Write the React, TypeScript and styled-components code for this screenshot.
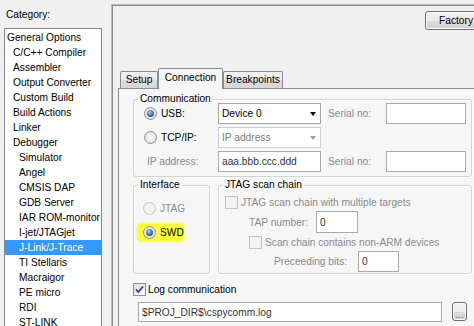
import React from 'react';
import styled, { createGlobalStyle, css } from 'styled-components';

const GlobalStyle = createGlobalStyle`
  *, *::before, *::after { box-sizing: border-box; }
  html, body { margin: 0; padding: 0; }
  body {
    background: #f0f0f0;
    font-family: "Liberation Sans", Arial, sans-serif;
    font-size: 10.2px;
    color: #000;
    overflow: hidden;
  }
`;

const GRAY = '#8a8a8a';

const Window = styled.div`
  display: flex;
  align-items: flex-start;
  width: 474px;
  height: 326px;
  overflow: hidden;
`;

// left column: category tree
const Sidebar = styled.div`
  display: flex;
  flex-direction: column;
  flex: none;
  width: 102px;
  height: 360px;
  padding: 8px 0 0 4px;
`;

const CategoryLabel = styled.div`
  line-height: 13px;
  padding-left: 2px;
  margin-bottom: 7px;
`;

const CategoryList = styled.ul`
  flex: 1;
  margin: 0;
  padding: 1px 0;
  list-style: none;
  background: #fff;
  border: 1px solid #828790;
  overflow: hidden;
`;

const CategoryItem = styled.li<{ $level: number; $selected?: boolean }>`
  height: 15px;
  line-height: 15px;
  padding-left: ${p => 2 + p.$level * 6}px;
  white-space: nowrap;
  ${p => p.$selected && css`
    background: #3399ff;
    color: #fff;
  `}
`;

// right side: options panel
const Panel = styled.section`
  flex: none;
  display: flex;
  flex-direction: column;
  width: 380px;
  height: 360px;
  margin: 4px 0 0 9px;
  padding: 6px 4px 0 6px;
  border-top: 1px solid #b9b9b9;
  border-left: 1px solid #b9b9b9;
  box-shadow: inset 1px 1px 0 #8c8c8c;
`;

const HeaderRow = styled.div`
  display: flex;
  justify-content: flex-end;
`;

const PushButton = styled.button<{ $width: number; $height: number }>`
  width: ${p => p.$width}px;
  height: ${p => p.$height}px;
  padding: 0;
  font: inherit;
  color: #000;
  border: 1px solid #707070;
  border-radius: 3px;
  background: linear-gradient(#f2f2f2 0%, #ebebeb 50%, #dddddd 51%, #cfcfcf 100%);
  box-shadow: inset 0 0 0 1px #fcfcfc;
`;

const Ellipsis = styled.span`
  display: block;
  color: #6a6a6a;
  line-height: 8px;
  margin-top: 6px;
`;

const TabStrip = styled.div`
  display: flex;
  align-items: flex-end;
  height: 20px;
  margin-top: 38px;
  padding-left: 2px;
`;

const Tab = styled.div<{ $width: number; $active?: boolean }>`
  position: relative;
  width: ${p => p.$width}px;
  height: 17px;
  line-height: 15px;
  text-align: center;
  border: 1px solid #898c95;
  border-bottom: none;
  border-radius: 2px 2px 0 0;
  background: linear-gradient(#f2f2f2, #ebebeb 50%, #dddddd 51%, #d6d6d6);
  ${p => p.$active && css`
    z-index: 1;
    height: 21px;
    margin-bottom: -1px;
    line-height: 18px;
    background: #f6f6f6;
  `}
`;

const TabPage = styled.div`
  flex: 1;
  padding: 6px 0 0 14px;
  background: #f6f6f6;
  border: 1px solid #898c95;
`;

const GroupBox = styled.fieldset<{ $width: number }>`
  margin: 0;
  padding: 0;
  min-width: 0;
  width: ${p => p.$width}px;
  border: 1px solid #d3d3d3;
  border-radius: 3px;
  box-shadow: inset 1px 1px 0 #fff, 1px 1px 0 #fff;
`;

const Legend = styled.legend`
  margin-left: 4px;
  padding: 0 2px;
  height: 8px;
  line-height: 8px;
`;

const CommGrid = styled.div`
  display: grid;
  grid-template-columns: 74px 110px 58px 80px;
  grid-auto-rows: 21px;
  row-gap: 3px;
  align-items: center;
  padding: 0 0 4px 10px;
`;

const Option = styled.label<{ $disabled?: boolean }>`
  display: flex;
  align-items: center;
  gap: 4px;
  color: ${p => (p.$disabled ? GRAY : '#000')};
`;

const Label = styled.span<{ $disabled?: boolean; $indent?: number; $width?: number }>`
  flex: none;
  white-space: nowrap;
  color: ${p => (p.$disabled ? GRAY : '#000')};
  padding-left: ${p => p.$indent ?? 0}px;
  ${p => p.$width !== undefined && css`width: ${p.$width}px;`}
`;

const Radio = styled.span<{ $checked?: boolean; $disabled?: boolean }>`
  position: relative;
  flex: none;
  width: 13px;
  height: 13px;
  border-radius: 50%;
  border: 1px solid ${p => (p.$disabled ? '#c4c4c4' : '#8e8f8f')};
  background: ${p => (p.$disabled ? '#f2f2f2' : 'radial-gradient(circle at 50% 50%, #f8f8f8, #d8d8d8)')};
  ${p => p.$checked && css`
    &::after {
      content: "";
      position: absolute;
      left: 2px;
      top: 2px;
      width: 7px;
      height: 7px;
      border-radius: 50%;
      background: radial-gradient(circle at 40% 35%, #a9c8e8, #2b5b8e 70%);
    }
  `}
`;

const Box = styled.span<{ $disabled?: boolean }>`
  display: flex;
  align-items: center;
  justify-content: center;
  flex: none;
  width: 13px;
  height: 13px;
  border: 1px solid ${p => (p.$disabled ? '#c0c0c0' : '#8e8f8f')};
  background: ${p => (p.$disabled ? '#f3f3f3' : 'linear-gradient(135deg, #dcdcdc, #fdfdfd)')};
`;

const ComboBox = styled.div<{ $disabled?: boolean }>`
  display: flex;
  align-items: center;
  justify-content: space-between;
  width: 103px;
  height: 21px;
  padding: 0 4px 0 3px;
  background: #fff;
  border: 1px solid ${p => (p.$disabled ? '#cfcfcf' : '#a6a6a6')};
  color: ${p => (p.$disabled ? '#7a7a7a' : '#000')};
`;

const Arrow = styled.span<{ $disabled?: boolean }>`
  width: 0;
  height: 0;
  border-left: 3.5px solid transparent;
  border-right: 3.5px solid transparent;
  border-top: 4px solid ${p => (p.$disabled ? '#a0a0a0' : '#000')};
`;

const TextField = styled.input<{ $width: number; $height?: number }>`
  flex: none;
  width: ${p => p.$width}px;
  height: ${p => p.$height ?? 21}px;
  margin: 0;
  padding: 0 3px;
  font: inherit;
  color: #333;
  background: #fff;
  border: 1px solid #a9a9a9;
  outline: none;
`;

const GroupRow = styled.div`
  display: flex;
  align-items: stretch;
  gap: 8px;
  margin-top: 4px;
`;

const RadioStack = styled.div`
  display: grid;
  grid-auto-rows: 24px;
  align-items: center;
  padding: 7px 0 0 9px;
`;

const Highlight = styled.span`
  display: flex;
  align-items: center;
  gap: 4px;
  width: 45px;
  margin-left: -5px;
  padding: 2px 0 2px 5px;
  border-radius: 3px;
  background: #fbfb3a;
  box-shadow: 0 0 2px 1px #fbfb3a;
`;

const ChainGrid = styled.div`
  display: grid;
  grid-template-rows: 14px 22px 14px 21px;
  row-gap: 2px;
  padding: 6px 0 1px 6px;
`;

const Line = styled.div<{ $indent?: number }>`
  display: flex;
  align-items: center;
  gap: 3px;
  padding-left: ${p => p.$indent ?? 0}px;
`;

const LogRow = styled(Line)`
  height: 14px;
  margin-top: 8px;
  gap: 2px;
`;

const PathRow = styled.div`
  display: flex;
  align-items: flex-start;
  gap: 10px;
  margin-top: 6px;
  padding-left: 5px;
`;

const Check = () => (
  <svg width="11" height="11" viewBox="0 0 11 11">
    <path d="M2 5.5 L4.4 8 L9 2.5" fill="none" stroke="#2a3f7a" strokeWidth="1.8" />
  </svg>
);

const categories: [string, number][] = [
  ['General Options', 0],
  ['C/C++ Compiler', 1],
  ['Assembler', 1],
  ['Output Converter', 1],
  ['Custom Build', 1],
  ['Build Actions', 1],
  ['Linker', 1],
  ['Debugger', 1],
  ['Simulator', 2],
  ['Angel', 2],
  ['CMSIS DAP', 2],
  ['GDB Server', 2],
  ['IAR ROM-monitor', 2],
  ['I-jet/JTAGjet', 2],
  ['J-Link/J-Trace', 2],
  ['TI Stellaris', 2],
  ['Macraigor', 2],
  ['PE micro', 2],
  ['RDI', 2],
  ['ST-LINK', 2],
];

const App: React.FC = () => (
  <>
    <GlobalStyle />
    <Window>
      <Sidebar>
        <CategoryLabel>Category:</CategoryLabel>
        <CategoryList>
          {categories.map(([name, level]) => (
            <CategoryItem key={name} $level={level} $selected={name === 'J-Link/J-Trace'}>
              {name}
            </CategoryItem>
          ))}
        </CategoryList>
      </Sidebar>

      <Panel>
        <HeaderRow>
          <PushButton $width={62} $height={19}>Factory</PushButton>
        </HeaderRow>

        <TabStrip>
          <Tab $width={38}>Setup</Tab>
          <Tab $width={65} $active>Connection</Tab>
          <Tab $width={60}>Breakpoints</Tab>
        </TabStrip>

        <TabPage>
          <GroupBox $width={339}>
            <Legend>Communication</Legend>
            <CommGrid>
              <Option><Radio $checked />USB:</Option>
              <ComboBox>Device 0<Arrow /></ComboBox>
              <Label $disabled>Serial no:</Label>
              <TextField $width={80} readOnly defaultValue="" />

              <Option><Radio />TCP/IP:</Option>
              <ComboBox $disabled>IP address<Arrow $disabled /></ComboBox>
              <span />
              <span />

              <Label $disabled $indent={3}>IP address:</Label>
              <TextField $width={103} readOnly defaultValue="aaa.bbb.ccc.ddd" />
              <Label $disabled>Serial no:</Label>
              <TextField $width={80} readOnly defaultValue="" />
            </CommGrid>
          </GroupBox>

          <GroupRow>
            <GroupBox $width={77}>
              <Legend>Interface</Legend>
              <RadioStack>
                <Option $disabled><Radio $disabled />JTAG</Option>
                <Option>
                  <Highlight><Radio $checked />SWD</Highlight>
                </Option>
              </RadioStack>
            </GroupBox>

            <GroupBox $width={254}>
              <Legend>JTAG scan chain</Legend>
              <ChainGrid>
                <Line>
                  <Box $disabled />
                  <Label $disabled>JTAG scan chain with multiple targets</Label>
                </Line>
                <Line $indent={24}>
                  <Label $disabled $width={64}>TAP number:</Label>
                  <TextField $width={42} $height={22} readOnly defaultValue="0" />
                </Line>
                <Line $indent={24}>
                  <Box $disabled />
                  <Label $disabled>Scan chain contains non-ARM devices</Label>
                </Line>
                <Line $indent={49}>
                  <Label $disabled $width={81}>Preceeding bits:</Label>
                  <TextField $width={41} readOnly defaultValue="0" />
                </Line>
              </ChainGrid>
            </GroupBox>
          </GroupRow>

          <LogRow>
            <Box><Check /></Box>
            <Label>Log communication</Label>
          </LogRow>

          <PathRow>
            <TextField $width={304} $height={20} readOnly defaultValue="$PROJ_DIR$\cspycomm.log" />
            <PushButton $width={15} $height={19}><Ellipsis>...</Ellipsis></PushButton>
          </PathRow>
        </TabPage>
      </Panel>
    </Window>
  </>
);

export default App;
